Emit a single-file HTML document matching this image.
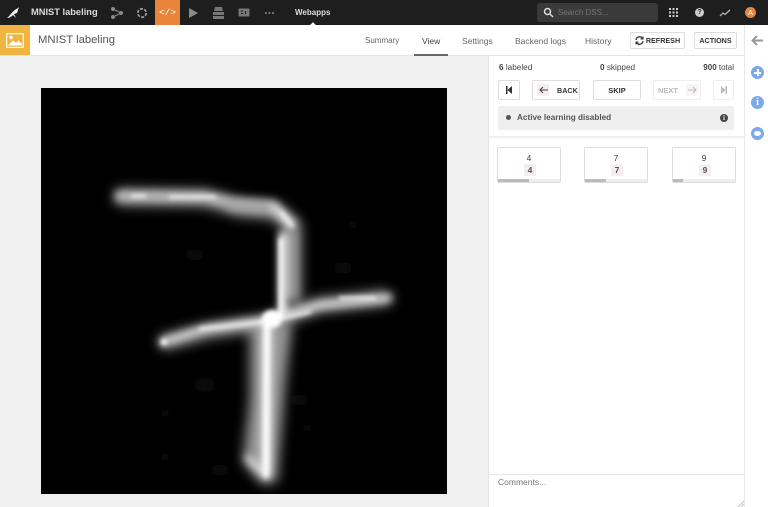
<!DOCTYPE html>
<html><head><meta charset="utf-8"><style>
html,body{margin:0;padding:0}
body{width:768px;height:507px;overflow:hidden;position:relative;background:#fff;font-family:"Liberation Sans",sans-serif;color:#444}
#w{position:absolute;left:0;top:0;width:768px;height:507px;filter:blur(.35px)}
.a{position:absolute;white-space:nowrap}
.btn{position:absolute;box-sizing:border-box;border:1px solid #ddd;border-radius:2px;background:#fff;font-weight:bold;font-size:8px;color:#333;display:flex;align-items:center;justify-content:center}
.tab{position:absolute;top:36px;font-size:8.3px;color:#666;white-space:nowrap}
.card{position:absolute;top:147px;width:64px;height:36px;box-sizing:border-box;border:1px solid #ddd;border-radius:2px;background:#fff;text-align:center;font-size:8.5px;color:#444}
.card .n{position:absolute;left:0;right:0;top:5px}
.card .k{position:absolute;left:26px;top:16px;width:12px;height:12px;background:#f6eeee;line-height:12px;font-weight:bold;color:#555}
.card .bg{position:absolute;left:0;right:0;bottom:0;height:3px;background:#eee}
.card .fg{position:absolute;left:0;bottom:0;height:3px;background:#bbb}
</style></head><body><div id="w">
<div class="a" style="left:0;top:0;width:768px;height:25px;background:#1e1e1e"></div>
<svg class="a" style="left:6px;top:5px" width="14" height="15" viewBox="0 0 14 15"><path d="M1 13C4 11 6 6 12 3L13 2 11 8 8 9 10 13 7 10C5 12 3 13 1 13Z" fill="#f2f2f2"/></svg>
<div class="a" style="left:31px;top:7px;font-size:9.3px;font-weight:bold;color:#dcdcdc">MNIST labeling</div>
<svg class="a" style="left:110px;top:6px" width="14" height="14" viewBox="0 0 14 14" fill="none" stroke="#8a8a8a"><path d="M3 3L11 7 3 11"/><circle cx="3" cy="3" r="1.5" fill="#8a8a8a"/><circle cx="11" cy="7" r="1.5" fill="#8a8a8a"/><circle cx="3" cy="11" r="1.5" fill="#8a8a8a"/></svg>
<svg class="a" style="left:135px;top:6px" width="14" height="14" viewBox="0 0 14 14" fill="none"><circle cx="7" cy="7" r="4.2" stroke="#999" stroke-width="1.8" stroke-dasharray="3 1.4"/></svg>
<div class="a" style="left:155px;top:0;width:25px;height:25px;background:#e8853b"></div>
<div class="a" style="left:155px;top:7px;width:25px;text-align:center;font-size:9.5px;color:#fff;font-family:'Liberation Mono',monospace">&lt;/&gt;</div>
<svg class="a" style="left:188px;top:7px" width="11" height="12"><path d="M1 1L10 6 1 11Z" fill="#8a8a8a"/></svg>
<svg class="a" style="left:212px;top:6px" width="13" height="13" fill="#777"><path d="M3 1H10L11 5H2Z"/><rect x="1" y="6" width="11" height="3"/><rect x="1" y="10" width="11" height="3"/></svg>
<svg class="a" style="left:238px;top:8px" width="12" height="10" fill="none"><rect x=".5" y=".5" width="11" height="8" rx="1" fill="#777"/><path d="M3 3H5M3 5.500H5M7.500 3V6" stroke="#222"/></svg>
<div class="a" style="left:265px;top:12px;width:2px;height:2px;border-radius:1px;background:#888;box-shadow:3.500px 0 #888,7px 0 #888"></div>
<div class="a" style="left:295px;top:8px;font-size:8px;font-weight:bold;color:#ddd">Webapps</div>
<div class="a" style="left:311px;top:23px;width:4px;height:4px;background:#fff;transform:rotate(45deg)"></div>
<div class="a" style="left:537px;top:3px;width:121px;height:19px;background:#3a3a3a;border-radius:3px"></div>
<svg class="a" style="left:543px;top:7px" width="11" height="11" fill="none" stroke="#ddd" stroke-width="1.500"><circle cx="4.500" cy="4.500" r="3"/><path d="M7 7L10 10"/></svg>
<div class="a" style="left:558px;top:8px;font-size:8px;color:#777">Search DSS...</div>
<svg class="a" style="left:669px;top:8px" width="9" height="9" fill="#ccc"><path d="M0 0h2v2H0zM3.500 0h2v2h-2zM7 0h2v2H7zM0 3.500h2v2H0zM3.500 3.500h2v2h-2zM7 3.500h2v2H7zM0 7h2v2H0zM3.500 7h2v2h-2zM7 7h2v2H7z"/></svg>
<div class="a" style="left:695px;top:8px;width:9px;height:9px;border-radius:50%;background:#ccc;color:#222;font-size:7px;font-weight:bold;text-align:center;line-height:9px">?</div>
<svg class="a" style="left:719px;top:9px" width="12" height="8" fill="none" stroke="#bbb" stroke-width="1.200"><path d="M1 7L4 4 6 5.500 11 1"/></svg>
<div class="a" style="left:745px;top:7px;width:11px;height:11px;border-radius:50%;background:#e8853b;color:#fff;font-size:7.500px;text-align:center;line-height:11px">A</div>

<div class="a" style="left:0;top:25px;width:744px;height:30px;background:#fff;border-bottom:1px solid #e4e4e4"></div>
<div class="a" style="left:0;top:25px;width:30px;height:30px;background:#f0b440"></div>
<svg class="a" style="left:6px;top:33px" width="18" height="15" fill="none"><rect x=".7" y=".7" width="16.600" height="13.600" stroke="#fff" stroke-width="1.200"/><circle cx="5" cy="4.500" r="1.700" fill="#fff"/><path d="M2 12.500L7 7.500 10 10 12.500 7.500 16 11V12.500Z" fill="#fff"/></svg>
<div class="a" style="left:38px;top:34px;font-size:11.300px;color:#555">MNIST labeling</div>
<div class="tab" style="left:365px;font-size:8px">Summary</div>
<div class="tab" style="left:422px;color:#444;font-size:8.500px">View</div>
<div class="a" style="left:414px;top:54px;width:34px;height:2px;background:#666"></div>
<div class="tab" style="left:462px;font-size:8.500px">Settings</div>
<div class="tab" style="left:515px;font-size:8.500px">Backend logs</div>
<div class="tab" style="left:585px;font-size:8.500px">History</div>
<div class="btn" style="left:630px;top:32px;width:55px;height:17px;font-size:7.200px"><svg width="9" height="9" viewBox="0 0 9 9" fill="none" stroke="#333" stroke-width="1.300" style="margin-right:2px"><path d="M1 4A3.500 3.500 0 0 1 7.500 2.500M8 5A3.500 3.500 0 0 1 1.500 6.500"/><path d="M8 .5V3H5.500M1 8.500V6H3.500" stroke-width="1"/></svg>REFRESH</div>
<div class="btn" style="left:694px;top:32px;width:43px;height:17px;font-size:7.200px">ACTIONS</div>

<div class="a" style="left:0;top:56px;width:488px;height:451px;background:#f0f0f0"></div>
<div class="a" style="left:488px;top:56px;width:1px;height:451px;background:#e4e4e4"></div>
<div class="a" style="left:744px;top:25px;width:1px;height:482px;background:#e8e8e8"></div>

<svg class="a" style="left:41px;top:88px;background:#000" width="406" height="406" viewBox="41 88 406 406">
<defs>
<filter id="b7" filterUnits="userSpaceOnUse" x="41" y="88" width="406" height="406"><feGaussianBlur stdDeviation="6"/></filter>
<filter id="b4" filterUnits="userSpaceOnUse" x="41" y="88" width="406" height="406"><feGaussianBlur stdDeviation="4"/></filter>
<filter id="b2" filterUnits="userSpaceOnUse" x="41" y="88" width="406" height="406"><feGaussianBlur stdDeviation="2.200"/></filter>
</defs>
<g filter="url(#b7)" fill="#141414">
<circle cx="343" cy="268" r="6"/><circle cx="322" cy="268" r="4"/><circle cx="368" cy="268" r="4"/><circle cx="353" cy="225" r="5"/>
<circle cx="205" cy="385" r="7"/><circle cx="165" cy="413" r="5"/><circle cx="165" cy="457" r="5"/><circle cx="307" cy="428" r="5"/><circle cx="195" cy="255" r="6"/><circle cx="220" cy="470" r="6"/><circle cx="300" cy="400" r="6"/>
</g>
<g fill="none" stroke-linecap="round" stroke-linejoin="round">
<g filter="url(#b7)">
<path d="M122 197L205 198 240 208 275 211 293 226 293 295" stroke="#8a8a8a" stroke-width="17"/>
<path d="M166 342L207 331 270 322 320 305 385 298" stroke="#8a8a8a" stroke-width="15"/>
<polygon points="250,325 292,325 286,375 277,482 262,484 243,462 250,400" fill="#9a9a9a" stroke="none"/>
</g>
<g filter="url(#b4)">
<path d="M120 196L205 197 235 203 275 207" stroke="#c0c0c0" stroke-width="9"/>
<path d="M232 204L272 207" stroke="#aaa" stroke-width="13"/>
<path d="M275 208L291 224" stroke="#ddd" stroke-width="9"/>
<path d="M293 235L293 295" stroke="#999" stroke-width="7"/>
<path d="M283 235L283 310" stroke="#e8e8e8" stroke-width="9"/>
<path d="M163 342L205 329 270 320 320 305 388 298" stroke="#ddd" stroke-width="7"/>
<path d="M267 320L266 475" stroke="#f0f0f0" stroke-width="9"/>
<path d="M248 458L266 476" stroke="#ddd" stroke-width="6"/>
</g>
<g filter="url(#b2)">
<path d="M132 196H145M170 197H215" stroke="#fff" stroke-width="2.500"/>
<path d="M281 212L292 226" stroke="#fff" stroke-width="2.500"/>
<path d="M281 240L281 315" stroke="#fff" stroke-width="4"/>
<path d="M200 329L265 322 310 312M340 298H375" stroke="#fff" stroke-width="2.500"/>
<circle cx="164" cy="342" r="3" fill="#fff" stroke="none"/>
<path d="M267 320L266 475" stroke="#fff" stroke-width="4.500"/>
<ellipse cx="272" cy="319" rx="10" ry="9" fill="#fff" stroke="none"/>
</g>
</g>
</svg>

<div class="a" style="left:499px;top:63px;font-size:8.200px"><b>6</b> labeled</div>
<div class="a" style="left:600px;top:63px;font-size:8.200px"><b>0</b> skipped</div>
<div class="a" style="right:34px;top:63px;font-size:8px"><b>900</b> total</div>

<div class="btn" style="left:498px;top:80px;width:22px;height:20px"><svg width="8" height="8" fill="#333"><path d="M1 0h1.500v8H1zM7 0v8L2.500 4z"/></svg></div>
<div class="btn" style="left:532px;top:80px;width:48px;height:20px;justify-content:flex-start"><span style="width:12px;height:12px;margin-left:4px;background:#f6eeee;display:flex;align-items:center;justify-content:center"><svg width="9" height="8" fill="none" stroke="#444"><path d="M9 4H1M4 1L1 4 4 7"/></svg></span><span style="margin-left:8px;font-size:7.200px">BACK</span></div>
<div class="btn" style="left:593px;top:80px;width:48px;height:20px;font-size:7.500px">SKIP</div>
<div class="btn" style="left:653px;top:80px;width:48px;height:20px;color:#bbb;border-color:#eee;justify-content:flex-start"><span style="margin-left:4px;font-size:7.500px">NEXT</span><span style="width:12px;height:12px;margin-left:8px;background:#f8f4f4;display:flex;align-items:center;justify-content:center"><svg width="9" height="8" fill="none" stroke="#bbb"><path d="M0 4H8M5 1L8 4 5 7"/></svg></span></div>
<div class="btn" style="left:713px;top:80px;width:21px;height:20px;border-color:#eee"><svg width="8" height="8" fill="#bbb"><path d="M5.500 0H7v8H5.500zM1 0v8l4.500-4z"/></svg></div>

<div class="a" style="left:498px;top:106px;width:236px;height:24px;background:#efefef;border-radius:2px"></div>
<div class="a" style="left:506px;top:115px;width:5px;height:5px;border-radius:50%;background:#555"></div>
<div class="a" style="left:517px;top:113px;font-size:8.200px;font-weight:bold;color:#555">Active learning disabled</div>
<div class="a" style="left:720px;top:114px;width:8px;height:8px;border-radius:50%;background:#444;color:#efefef;font:bold 7px/8px 'Liberation Serif',serif;text-align:center">i</div>
<div class="a" style="left:489px;top:136px;width:255px;height:2px;background:#efefef"></div>

<div class="card" style="left:497px"><div class="n">4</div><div class="k">4</div><div class="bg"></div><div class="fg" style="width:31px"></div></div>
<div class="card" style="left:584px"><div class="n">7</div><div class="k">7</div><div class="bg"></div><div class="fg" style="width:21px"></div></div>
<div class="card" style="left:672px"><div class="n">9</div><div class="k">9</div><div class="bg"></div><div class="fg" style="width:10px"></div></div>

<div class="a" style="left:489px;top:474px;width:255px;height:1px;background:#e6e6e6"></div>
<div class="a" style="left:498px;top:477px;font-size:8.500px;color:#777">Comments...</div>
<svg class="a" style="left:738px;top:501px" width="6" height="6" stroke="#aaa" stroke-width=".7"><path d="M0 6L6 0M3 6L6 3"/></svg>

<svg class="a" style="left:751px;top:35px" width="12" height="11" fill="none" stroke="#999" stroke-width="2"><path d="M12 5.500H2M6 1L1.500 5.500 6 10"/></svg>
<div class="a" style="left:751px;top:66px;width:13px;height:13px;border-radius:50%;background:#7da9e8"></div>
<div class="a" style="left:754px;top:71.500px;width:7px;height:2px;background:#fff"></div>
<div class="a" style="left:756.500px;top:69px;width:2px;height:7px;background:#fff"></div>
<div class="a" style="left:751px;top:96px;width:13px;height:13px;border-radius:50%;background:#7da9e8;color:#fff;font:bold 10px/13px 'Liberation Serif',serif;text-align:center">i</div>
<div class="a" style="left:751px;top:127px;width:13px;height:13px;border-radius:50%;background:#7da9e8"></div>
<div class="a" style="left:754px;top:131px;width:7px;height:5px;border-radius:50%;background:#fff"></div>
</div></body></html>
